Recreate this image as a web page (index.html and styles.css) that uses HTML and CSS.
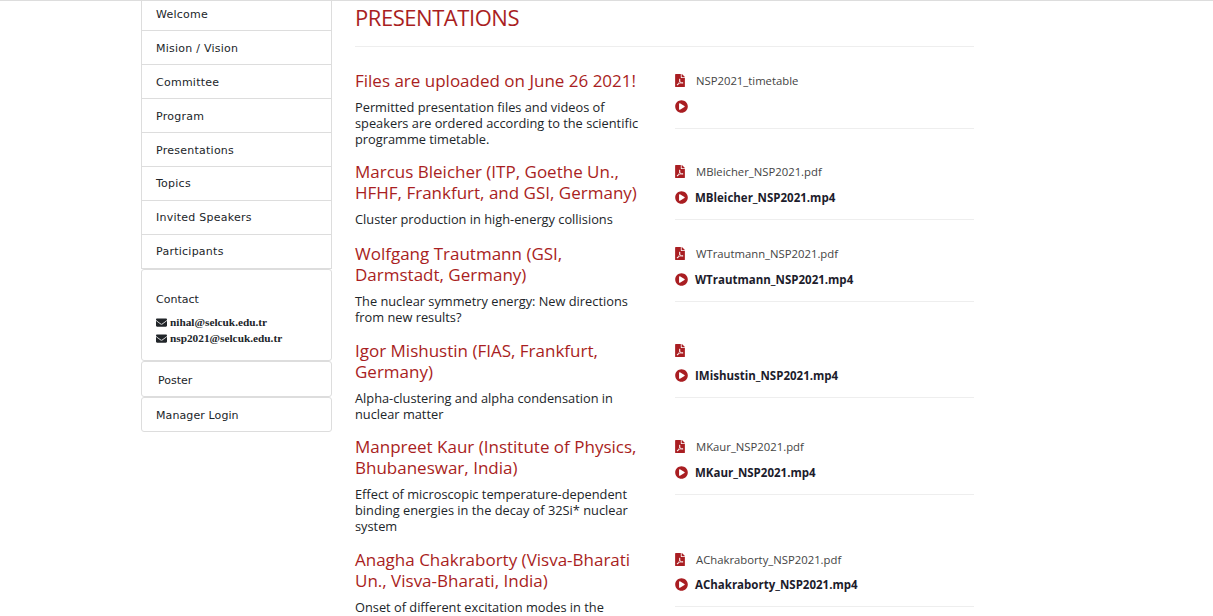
FILE: index.html
```html
<!DOCTYPE html>
<html lang="en">
<head>
	<meta charset="UTF-8">
	<title>NSP2021 Presentations</title>
	<link rel="stylesheet" href="styles.css">
</head>
<body>
	<svg class="defs" width="0" height="0">
		<symbol id="pdf" viewBox="0 0 384 512"><path d="M181.9 256.1c-5-16-4.9-46.9-2-46.9 8.4 0 7.6 36.9 2 46.9zm-1.7 47.2c-7.7 20.2-17.3 43.3-28.4 62.7 18.3-7 39-17.2 62.9-21.9-12.7-9.6-24.9-23.4-34.5-40.8zM86.1 428.1c0 .8 13.2-5.4 34.9-40.2-6.7 6.3-29.1 24.5-34.9 40.2zM248 160h136v328c0 13.3-10.7 24-24 24H24c-13.3 0-24-10.7-24-24V24C0 10.7 10.7 0 24 0h200v136c0 13.2 10.8 24 24 24zm-8 171.8c-20-12.2-33.3-29-42.7-53.8 4.5-18.5 11.6-46.6 6.2-64.2-4.7-29.4-42.4-26.5-47.8-6.8-5 18.3-.4 44.1 8.1 77-11.6 27.6-28.7 64.6-40.8 85.8-.1 0-.1.1-.2.1-27.1 13.9-73.6 44.5-54.5 68 5.6 6.9 16 10 21.5 10 17.9 0 35.7-18 61.1-61.8 25.8-8.5 54.1-19.1 79-23.2 21.7 11.8 47.1 19.5 64 19.5 29.2 0 31.2-32 19.7-43.4-13.9-13.6-54.3-9.7-73.6-7.2zM377 105L279 7c-4.5-4.5-10.6-7-17-7h-6v128h128v-6.1c0-6.3-2.5-12.4-7-16.9zm-74.1 255.3c4.1-2.7-2.5-11.9-42.8-9 37.1 15.8 42.8 9 42.8 9z"/></symbol>
		<symbol id="play" viewBox="0 0 512 512"><path d="M256 8C119 8 8 119 8 256s111 248 248 248 248-111 248-248S393 8 256 8zm115.7 272l-176 101c-15.8 8.8-35.7-2.5-35.7-20.8V152c0-17.4 18.8-28.5 35.7-19.8l176 107c16.4 9.2 16.4 32.9 0 40.8z"/></symbol>
		<symbol id="mail" viewBox="0 0 512 512"><path d="M502.3 190.8c3.9-3.1 9.7-.2 9.7 4.7V400c0 26.5-21.5 48-48 48H48c-26.5 0-48-21.5-48-48V195.6c0-5 5.7-7.8 9.7-4.7 22.4 17.4 52.1 39.5 154.1 113.6 21.1 15.4 56.7 47.8 92.2 47.6 35.7.3 72-32.8 92.3-47.6 102-74.1 131.6-96.3 154-113.7zM256 320c23.2.4 56.6-29.2 73.4-41.4 132.7-96.3 142.8-104.7 173.4-128.7 5.8-4.5 9.2-11.5 9.2-18.9v-19c0-26.5-21.5-48-48-48H48C21.5 64 0 85.5 0 112v19c0 7.4 3.4 14.3 9.2 18.9 30.6 23.9 40.7 32.4 173.4 128.7 16.8 12.2 50.2 41.8 73.4 41.4z"/></symbol>
	</svg>

	<div class="page">
		<div class="sidebar">
			<ul class="menu">
				<li><a href="#">Welcome</a></li>
				<li><a href="#">Mision / Vision</a></li>
				<li><a href="#">Committee</a></li>
				<li><a href="#">Program</a></li>
				<li><a href="#">Presentations</a></li>
				<li><a href="#">Topics</a></li>
				<li><a href="#">Invited Speakers</a></li>
				<li><a href="#">Participants</a></li>
			</ul>
			<div class="contact">
				<p>Contact</p>
				<div class="mail"><svg><use href="#mail"/></svg>nihal@selcuk.edu.tr</div>
				<div class="mail"><svg><use href="#mail"/></svg>nsp2021@selcuk.edu.tr</div>
			</div>
			<div class="poster"><a href="#">Poster</a></div>
			<div class="login"><a href="#">Manager Login</a></div>
		</div>

		<div class="main">
			<h1>PRESENTATIONS</h1>
			<hr>

			<div class="row intro">
				<div class="talk">
					<h3>Files are uploaded on June 26 2021!</h3>
					<p>Permitted presentation files and videos of<br>speakers are ordered according to the scientific<br>programme timetable.</p>
				</div>
				<div class="files">
					<a class="pdf" href="#"><svg><use href="#pdf"/></svg>NSP2021_timetable</a>
					<a class="mp4" href="#"><svg><use href="#play"/></svg></a>
				</div>
			</div>

			<div class="row">
				<div class="talk">
					<h3>Marcus Bleicher (ITP, Goethe Un.,<br>HFHF, Frankfurt, and GSI, Germany)</h3>
					<p>Cluster production in high-energy collisions</p>
				</div>
				<div class="files">
					<a class="pdf" href="#"><svg><use href="#pdf"/></svg>MBleicher_NSP2021.pdf</a>
					<a class="mp4" href="#"><svg><use href="#play"/></svg>MBleicher_NSP2021.mp4</a>
				</div>
			</div>

			<div class="row">
				<div class="talk">
					<h3>Wolfgang Trautmann (GSI,<br>Darmstadt, Germany)</h3>
					<p>The nuclear symmetry energy: New directions<br>from new results?</p>
				</div>
				<div class="files">
					<a class="pdf" href="#"><svg><use href="#pdf"/></svg>WTrautmann_NSP2021.pdf</a>
					<a class="mp4" href="#"><svg><use href="#play"/></svg>WTrautmann_NSP2021.mp4</a>
				</div>
			</div>

			<div class="row">
				<div class="talk">
					<h3>Igor Mishustin (FIAS, Frankfurt,<br>Germany)</h3>
					<p>Alpha-clustering and alpha condensation in<br>nuclear matter</p>
				</div>
				<div class="files">
					<a class="pdf" href="#"><svg><use href="#pdf"/></svg></a>
					<a class="mp4" href="#"><svg><use href="#play"/></svg>IMishustin_NSP2021.mp4</a>
				</div>
			</div>

			<div class="row">
				<div class="talk">
					<h3>Manpreet Kaur (Institute of Physics,<br>Bhubaneswar, India)</h3>
					<p>Effect of microscopic temperature-dependent<br>binding energies in the decay of 32Si* nuclear<br>system</p>
				</div>
				<div class="files">
					<a class="pdf" href="#"><svg><use href="#pdf"/></svg>MKaur_NSP2021.pdf</a>
					<a class="mp4" href="#"><svg><use href="#play"/></svg>MKaur_NSP2021.mp4</a>
				</div>
			</div>

			<div class="row">
				<div class="talk">
					<h3>Anagha Chakraborty (Visva-Bharati<br>Un., Visva-Bharati, India)</h3>
					<p>Onset of different excitation modes in the</p>
				</div>
				<div class="files">
					<a class="pdf" href="#"><svg><use href="#pdf"/></svg>AChakraborty_NSP2021.pdf</a>
					<a class="mp4" href="#"><svg><use href="#play"/></svg>AChakraborty_NSP2021.mp4</a>
				</div>
			</div>
		</div>
	</div>
</body>
</html>
```

FILE: styles.css
```css
html,body{height:616px;overflow:hidden;}
body{margin:0;border-top:1px solid #ddd;background:#fff;color:#212529;font-family:"Open Sans","Noto Sans",sans-serif;font-size:12.8px;}
a{color:inherit;text-decoration:none;}
.defs{position:absolute;}

.page{display:flex;align-items:flex-start;margin-left:141px;}

.sidebar{width:191px;flex:none;font-family:"DejaVu Sans",sans-serif;font-size:11px;color:#212529;}
.menu{list-style:none;margin:0;padding:0;}
.menu li{box-sizing:border-box;height:34px;line-height:33px;padding-left:14px;border:1px solid #ddd;border-top:0;letter-spacing:.25px;}
.menu li:nth-child(-n+5){line-height:35px;}
.menu li:first-child{height:30px;line-height:27px;}
.contact,.poster,.login{border:1px solid #ddd;border-radius:3px;padding-left:14px;box-sizing:border-box;}
.contact{height:92px;padding-top:22px;}
.contact p{margin:0 0 6px;line-height:16px;}
.mail{display:flex;align-items:center;height:16px;font-family:"Liberation Serif",serif;font-size:11.3px;font-weight:bold;}
.mail svg{width:11px;height:11px;margin-right:3px;fill:#212529;}
.poster{height:36px;line-height:37px;padding-left:16px;}
.login{height:35px;line-height:35px;letter-spacing:.1px;}

.main{width:619px;margin-left:23px;}
h1{margin:0;font-size:22px;font-weight:normal;line-height:33px;letter-spacing:-.45px;color:#a91e22;}
hr{margin:12px 0 22.5px;border:0;border-top:1px solid #eee;}

.row{display:flex;gap:30px;min-height:82px;}
.talk{width:290px;flex:none;}
h3{margin:0 0 8px;font-size:17px;font-weight:normal;line-height:21px;color:#a91e22;}
.talk p{margin:0 0 14.5px;line-height:16px;}
.files{flex:1;align-self:flex-start;height:59.5px;margin-top:-2px;display:flex;flex-direction:column;border-bottom:1px solid #eee;}
.files a{display:flex;align-items:center;height:25.5px;}
.intro .files{height:60.5px;}
.intro .mp4{margin-top:1px;}
.files svg{flex:none;}
.pdf{font-size:11.3px;color:#444;}
.pdf svg{width:10px;height:13px;margin-right:11px;fill:#a91e22;}
.mp4{font-weight:bold;font-size:11.5px;color:#1c1c2c;}
.mp4 svg{width:13px;height:13px;margin-right:7px;fill:#a91e22;}
```
